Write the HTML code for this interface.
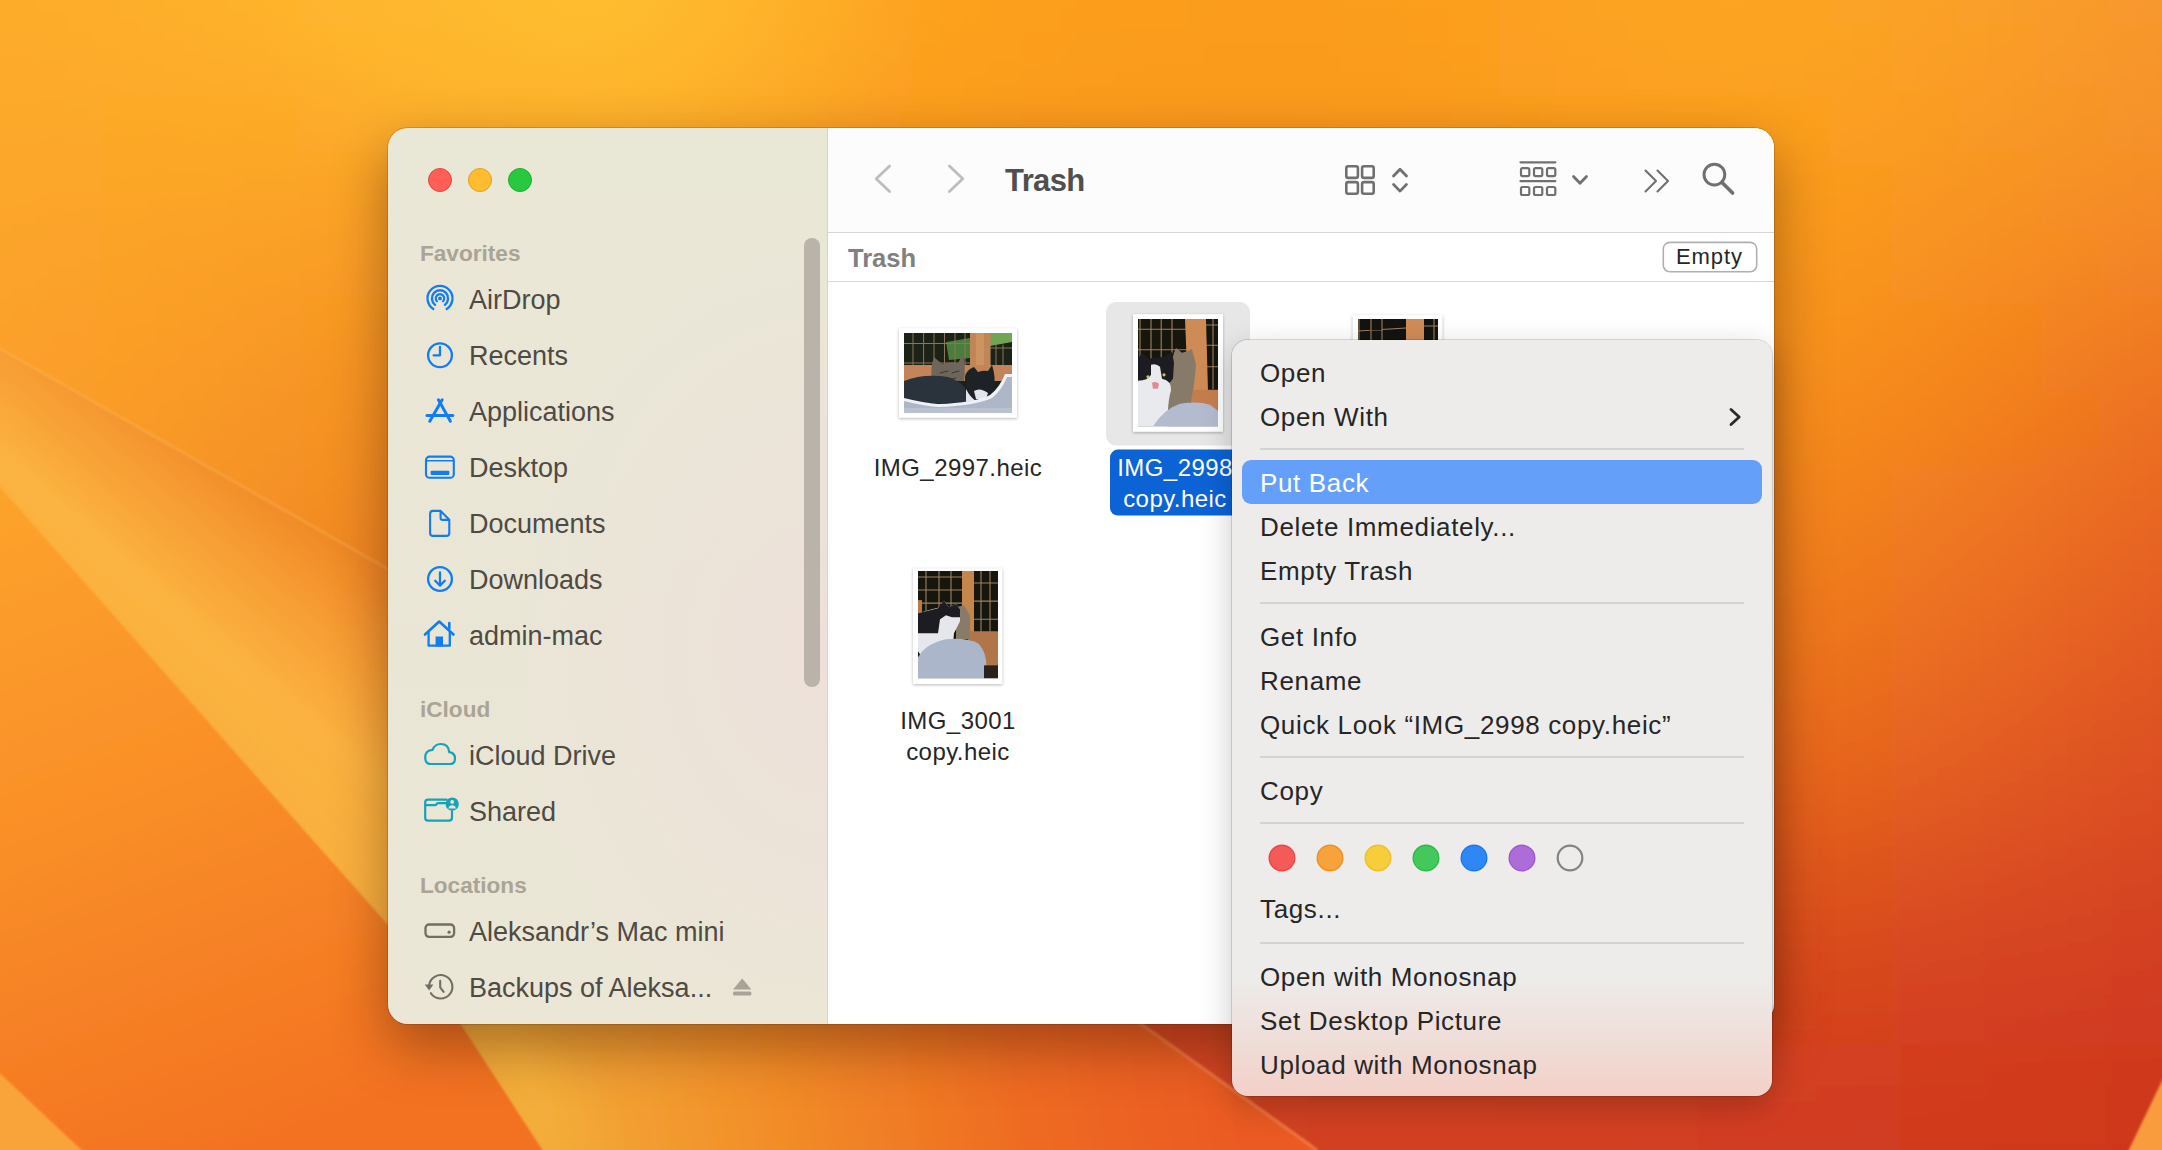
<!DOCTYPE html>
<html><head><meta charset="utf-8">
<style>
html,body{margin:0;padding:0;}
body{width:2162px;height:1150px;overflow:hidden;position:relative;font-family:"Liberation Sans",sans-serif;background:#F99A24;}
.abs{position:absolute;}
#wall{position:absolute;left:0;top:0;width:2162px;height:1150px;}
#win{position:absolute;left:388px;top:128px;width:1386px;height:896px;border-radius:20px;overflow:hidden;box-shadow:0 22px 55px rgba(50,15,0,0.40),0 0 0 1px rgba(0,0,0,0.14);}
#side{position:absolute;left:0;top:0;width:439px;height:896px;background:radial-gradient(ellipse 70% 45% at 100% 58%,rgba(237,224,218,1) 0%,rgba(237,224,218,0) 100%),linear-gradient(180deg,#E9E7D6 0%,#EAE6D6 60%,#EBE6D6 100%);border-right:1px solid #D9D3C3;}
#main{position:absolute;left:440px;top:0;width:946px;height:896px;background:#fff;}
#tb{position:absolute;left:0;top:0;width:946px;height:104px;background:#FCFCFC;border-bottom:1px solid #D6D6D6;}
#pb{position:absolute;left:0;top:105px;width:946px;height:48px;background:#fff;border-bottom:1px solid #D9D9D9;}
.tl{position:absolute;top:40px;width:24px;height:24px;border-radius:50%;box-sizing:border-box;}
.sh{position:absolute;left:32px;font-size:22.6px;font-weight:bold;color:#A9A495;}
.si{position:absolute;left:81px;font-size:27px;color:#4E4A44;white-space:nowrap;}
.ic{position:absolute;left:34px;}
#menu{position:absolute;left:1232px;top:340px;width:540px;height:756px;border-radius:16px;background:linear-gradient(180deg,#EDECEB 0%,#EDECEB 84%,#EEE4E0 89%,#F3D0C8 100%);box-shadow:0 0 0 1px rgba(0,0,0,0.13),0 10px 32px rgba(0,0,0,0.22);}
.mi{position:absolute;left:28px;font-size:26px;letter-spacing:0.65px;color:#262626;white-space:nowrap;line-height:30px;}
.sep{position:absolute;left:28px;width:484px;height:2px;background:#D3D3D3;}
.tag{position:absolute;top:504px;width:27px;height:27px;border-radius:50%;box-sizing:border-box;}
.lbl{position:absolute;font-size:24px;color:#262626;text-align:center;white-space:nowrap;line-height:31px;letter-spacing:0.45px;}
</style></head>
<body>
<svg id="wall" width="2162" height="1150" viewBox="0 0 2162 1150">
  <defs>
    <filter id="gblur" x="-300" y="-300" width="2762" height="1750" filterUnits="userSpaceOnUse"><feGaussianBlur stdDeviation="105"/></filter>
    <linearGradient id="gband" gradientUnits="userSpaceOnUse" x1="200" y1="713" x2="344" y2="544">
      <stop offset="0" stop-color="#FAAE3C"/>
      <stop offset="0.3" stop-color="#FBB240"/>
      <stop offset="0.65" stop-color="#F79E34"/>
      <stop offset="1" stop-color="#F08826"/>
    </linearGradient>
    <linearGradient id="gband2" gradientUnits="userSpaceOnUse" x1="0" y1="420" x2="1150" y2="1150">
      <stop offset="0" stop-color="#FFD060" stop-opacity="0.0"/>
      <stop offset="0.35" stop-color="#000" stop-opacity="0.0"/>
      <stop offset="1" stop-color="#900000" stop-opacity="0.0"/>
    </linearGradient>
    <linearGradient id="gbandB" gradientUnits="userSpaceOnUse" x1="540" y1="1150" x2="1230" y2="1040">
      <stop offset="0" stop-color="#F2AA38"/>
      <stop offset="0.35" stop-color="#F28C28"/>
      <stop offset="0.7" stop-color="#EE6A22"/>
      <stop offset="1" stop-color="#EA5A20"/>
    </linearGradient>
    <linearGradient id="gC" gradientUnits="userSpaceOnUse" x1="0" y1="480" x2="250" y2="1150">
      <stop offset="0" stop-color="#FDA42C"/>
      <stop offset="0.5" stop-color="#F98E28"/>
      <stop offset="1" stop-color="#F37222"/>
    </linearGradient>
    <radialGradient id="ry" gradientUnits="userSpaceOnUse" cx="590" cy="0" r="340" gradientTransform="translate(590 0) scale(1 0.7) translate(-590 0)">
      <stop offset="0" stop-color="#FFBE30" stop-opacity="0.85"/>
      <stop offset="0.6" stop-color="#FFBC30" stop-opacity="0.35"/>
      <stop offset="1" stop-color="#FFBC30" stop-opacity="0"/>
    </radialGradient>
    <clipPath id="bandclip"><path d="M-10 343 L388 569 L1140 1023 L1317 1150 L1331 1160 L549 1160 L460 1023 L388 925 L-10 476 Z"/></clipPath>
    <filter id="soft" x="-5%" y="-5%" width="110%" height="110%"><feGaussianBlur stdDeviation="1.2"/></filter>
    <filter id="soft2" x="-50%" y="-50%" width="200%" height="200%"><feGaussianBlur stdDeviation="25"/></filter>
  </defs>
  <g filter="url(#gblur)">
    <rect x="-400" y="-395" width="500" height="490" fill="#FDAC2C"/>
    <rect x="100" y="-395" width="200" height="490" fill="#FEB22C"/>
    <rect x="300" y="-395" width="200" height="490" fill="#FFB92E"/>
    <rect x="500" y="-395" width="200" height="490" fill="#FFBC2E"/>
    <rect x="700" y="-395" width="200" height="490" fill="#FEA822"/>
    <rect x="900" y="-395" width="200" height="490" fill="#FDA01E"/>
    <rect x="1100" y="-395" width="200" height="490" fill="#FC9E1C"/>
    <rect x="1300" y="-395" width="200" height="490" fill="#FC9E1E"/>
    <rect x="1500" y="-395" width="200" height="490" fill="#FDA420"/>
    <rect x="1700" y="-395" width="200" height="490" fill="#FDA822"/>
    <rect x="1900" y="-395" width="200" height="490" fill="#FAA02A"/>
    <rect x="2100" y="-395" width="500" height="490" fill="#F7962E"/>
    <rect x="-400" y="95" width="500" height="190" fill="#FCA62A"/>
    <rect x="100" y="95" width="200" height="190" fill="#FCA428"/>
    <rect x="300" y="95" width="200" height="190" fill="#FBA226"/>
    <rect x="500" y="95" width="200" height="190" fill="#FA9E24"/>
    <rect x="700" y="95" width="200" height="190" fill="#FA9C22"/>
    <rect x="900" y="95" width="200" height="190" fill="#FA9A1E"/>
    <rect x="1100" y="95" width="200" height="190" fill="#F9961C"/>
    <rect x="1300" y="95" width="200" height="190" fill="#FA981E"/>
    <rect x="1500" y="95" width="200" height="190" fill="#FB9C1E"/>
    <rect x="1700" y="95" width="200" height="190" fill="#FB9C1C"/>
    <rect x="1900" y="95" width="200" height="190" fill="#F89424"/>
    <rect x="2100" y="95" width="500" height="190" fill="#F48C2A"/>
    <rect x="-400" y="285" width="500" height="190" fill="#FBA02A"/>
    <rect x="100" y="285" width="200" height="190" fill="#F99A28"/>
    <rect x="300" y="285" width="200" height="190" fill="#F49024"/>
    <rect x="500" y="285" width="200" height="190" fill="#F08A22"/>
    <rect x="700" y="285" width="200" height="190" fill="#F08822"/>
    <rect x="900" y="285" width="200" height="190" fill="#F08620"/>
    <rect x="1100" y="285" width="200" height="190" fill="#F18620"/>
    <rect x="1300" y="285" width="200" height="190" fill="#F48C20"/>
    <rect x="1500" y="285" width="200" height="190" fill="#F7921E"/>
    <rect x="1700" y="285" width="200" height="190" fill="#F8921C"/>
    <rect x="1900" y="285" width="200" height="190" fill="#F4821E"/>
    <rect x="2100" y="285" width="500" height="190" fill="#EC6C24"/>
    <rect x="-400" y="475" width="500" height="190" fill="#FA9C2A"/>
    <rect x="100" y="475" width="200" height="190" fill="#F69228"/>
    <rect x="300" y="475" width="200" height="190" fill="#EE8424"/>
    <rect x="500" y="475" width="200" height="190" fill="#EC7E22"/>
    <rect x="700" y="475" width="200" height="190" fill="#EC7C22"/>
    <rect x="900" y="475" width="200" height="190" fill="#EC7A22"/>
    <rect x="1100" y="475" width="200" height="190" fill="#EC7822"/>
    <rect x="1300" y="475" width="200" height="190" fill="#EE7A20"/>
    <rect x="1500" y="475" width="200" height="190" fill="#F07E20"/>
    <rect x="1700" y="475" width="200" height="190" fill="#F2801C"/>
    <rect x="1900" y="475" width="200" height="190" fill="#EC6E20"/>
    <rect x="2100" y="475" width="500" height="190" fill="#E25A24"/>
    <rect x="-400" y="665" width="500" height="190" fill="#F89628"/>
    <rect x="100" y="665" width="200" height="190" fill="#F28626"/>
    <rect x="300" y="665" width="200" height="190" fill="#EA7424"/>
    <rect x="500" y="665" width="200" height="190" fill="#E66E22"/>
    <rect x="700" y="665" width="200" height="190" fill="#E46A22"/>
    <rect x="900" y="665" width="200" height="190" fill="#E46624"/>
    <rect x="1100" y="665" width="200" height="190" fill="#E46424"/>
    <rect x="1300" y="665" width="200" height="190" fill="#E66424"/>
    <rect x="1500" y="665" width="200" height="190" fill="#E86824"/>
    <rect x="1700" y="665" width="200" height="190" fill="#EA6A1E"/>
    <rect x="1900" y="665" width="200" height="190" fill="#E25A22"/>
    <rect x="2100" y="665" width="500" height="190" fill="#DC4C24"/>
    <rect x="-400" y="855" width="500" height="190" fill="#F58A26"/>
    <rect x="100" y="855" width="200" height="190" fill="#EE7C24"/>
    <rect x="300" y="855" width="200" height="190" fill="#E46624"/>
    <rect x="500" y="855" width="200" height="190" fill="#DE5A22"/>
    <rect x="700" y="855" width="200" height="190" fill="#DC5422"/>
    <rect x="900" y="855" width="200" height="190" fill="#DA5022"/>
    <rect x="1100" y="855" width="200" height="190" fill="#D84C22"/>
    <rect x="1300" y="855" width="200" height="190" fill="#DA4C22"/>
    <rect x="1500" y="855" width="200" height="190" fill="#D84820"/>
    <rect x="1700" y="855" width="200" height="190" fill="#D8461E"/>
    <rect x="1900" y="855" width="200" height="190" fill="#D44022"/>
    <rect x="2100" y="855" width="500" height="190" fill="#D03C24"/>
    <rect x="-400" y="1045" width="500" height="490" fill="#F27824"/>
    <rect x="100" y="1045" width="200" height="490" fill="#EC6E24"/>
    <rect x="300" y="1045" width="200" height="490" fill="#DE5A22"/>
    <rect x="500" y="1045" width="200" height="490" fill="#D64C22"/>
    <rect x="700" y="1045" width="200" height="490" fill="#D24622"/>
    <rect x="900" y="1045" width="200" height="490" fill="#D04222"/>
    <rect x="1100" y="1045" width="200" height="490" fill="#D04022"/>
    <rect x="1300" y="1045" width="200" height="490" fill="#D03E22"/>
    <rect x="1500" y="1045" width="200" height="490" fill="#D03C20"/>
    <rect x="1700" y="1045" width="200" height="490" fill="#D03A20"/>
    <rect x="1900" y="1045" width="200" height="490" fill="#D0381E"/>
    <rect x="2100" y="1045" width="500" height="490" fill="#CE361E"/>
  </g>
  <rect x="0" y="0" width="1200" height="400" fill="url(#ry)"/>
  <g filter="url(#soft)">
    <path d="M-10 343 L388 569 L1140 1023 L1317 1150 L1331 1160 L549 1160 L460 1023 L388 925 L-10 476 Z" fill="url(#gband)"/>
    <path d="M388 569 L1140 1023 L1317 1150 L1331 1160 L549 1160 L460 1023 L388 925 Z" fill="url(#gbandB)"/>
    <path d="M-10 476 L388 925 L460 1023 L549 1160 L-10 1160 Z" fill="url(#gC)"/>
    <path d="M-10 1064 L92 1160 L-10 1160 Z" fill="#F9A43A"/>
    <path d="M2172 1060 L2124 1160 L2172 1160 Z" fill="#F89C3E"/>
  </g>
  <path d="M-10 343 L388 569" stroke="#FFC870" stroke-opacity="0.3" stroke-width="2.5" fill="none" filter="url(#soft)"/>
  <path d="M1140 1023 L1317 1150" stroke="#FF9A60" stroke-opacity="0.5" stroke-width="3" fill="none" filter="url(#soft)"/>
  <g clip-path="url(#bandclip)">
    <path d="M-10 476 L388 925 L460 1023 L549 1160 L620 1160 L520 1000 L200 640 L-10 420 Z" fill="#FFC850" opacity="0.18" filter="url(#soft2)"/>
  </g>
  <g clip-path="url(#bandclip)">
    <rect x="-10" y="300" width="1400" height="900" fill="url(#gband2)"/>
  </g>
</svg>

<div id="win">
  <div id="side">
    <div class="tl" style="left:40px;background:#FF5F57;border:1px solid #E2463F;"></div>
    <div class="tl" style="left:80px;background:#FEBC2E;border:1px solid #DFA023;"></div>
    <div class="tl" style="left:120px;background:#28C840;border:1px solid #1DAD2B;"></div>
    <div class="abs" style="left:416px;top:110px;width:16px;height:449px;border-radius:8px;background:#B9B3A9;"></div>

    
    <svg class="abs" style="left:0;top:0;" width="439" height="895" viewBox="388 128 439 895" fill="none" stroke-linecap="round" stroke-linejoin="round">
      <g stroke="#127CF4" stroke-width="2.3">
        <!-- AirDrop -->
        <path d="M433.38 309 A12.5 12.5 0 1 1 446.62 309"/>
        <path d="M435.1 304.8 A8.1 8.1 0 1 1 444.9 304.8"/>
        <path d="M436.9 301.2 A4.2 4.2 0 1 1 443.1 301.2"/>
        <!-- Recents -->
        <circle cx="440" cy="355.3" r="11.9"/>
        <path d="M440 347 V355.3 H433.6"/>
        <!-- Applications -->
        <path d="M438.4 399.8 L450.4 421.2" stroke-width="3"/>
        <path d="M442.2 399.8 L429.8 421.2" stroke-width="3"/>
        <path d="M427 415.4 H452.8" stroke-width="3"/>
        <!-- Desktop -->
        <rect x="426" y="456.6" width="27.8" height="21.2" rx="3.6" stroke-width="2.1"/>
        <path d="M426.5 460.7 H453.3" stroke-width="1.6"/>
        <!-- Documents -->
        <path d="M440.6 510.9 H433 Q430.1 510.9 430.1 513.8 V533 Q430.1 535.9 433 535.9 H446.4 Q449.3 535.9 449.3 533 V519.8 Z" stroke-width="2.1"/>
        <path d="M440.6 511.2 V518 Q440.6 519.9 442.5 519.9 H449" stroke-width="2.1"/>
        <!-- Downloads -->
        <circle cx="440" cy="579" r="11.9"/>
        <path d="M440 572.5 V585.5 M435.2 580.8 L440 585.6 L444.8 580.8"/>
        <!-- Home -->
        <path d="M425 634.5 L439.2 621.5 L453.5 634.5" stroke-width="2.6"/>
        <path d="M428.6 632 V645.7 H449.8 V632" stroke-width="2.3"/>
        <path d="M449.3 623 V628.5" stroke-width="2.6"/>
      </g>
      <g fill="#127CF4">
        <circle cx="440" cy="298.4" r="1.9"/>
        <rect x="430.6" y="470.8" width="18.8" height="4.2" rx="1.2"/>
        <rect x="435.6" y="636.5" width="7.4" height="10" />
      </g>
      <g stroke="#17A2B6" stroke-width="2.2">
        <!-- iCloud -->
        <path d="M430.6 764 H450.2 Q455 764 455 758.6 Q455 753 449.2 752.2 Q448.6 744 440.8 744 Q434.8 744 432.6 749.8 Q425.2 750.4 425.2 757.3 Q425.2 764 430.6 764 Z"/>
        <!-- Shared -->
        <path d="M446.5 799.6 H428 Q425.2 799.6 425.2 802.4 V817.8 Q425.2 820.6 428 820.6 H449 Q452 820.6 452 817.8 V811"/>
        <path d="M425.5 805.2 H435.5 L437.6 803.1 H446" />
      </g>
      <g fill="#17A2B6">
        <circle cx="452.2" cy="804" r="6.6"/>
      </g>
      <g fill="#ECE6D5">
        <circle cx="452.2" cy="801.9" r="1.9"/>
        <path d="M448.4 808.6 Q449 805.2 452.2 805.2 Q455.4 805.2 456 808.6 Z"/>
      </g>
      <g stroke="#736E64" stroke-width="2.3">
        <!-- HD -->
        <rect x="425.5" y="924.5" width="28.6" height="12.4" rx="3.6"/>
        <!-- Time machine -->
        <path d="M429.1 985.2 A11.7 11.7 0 1 1 430.9 993.2" stroke-width="2.1"/>
        <path d="M440.2 980.8 V987.4 L443.6 991.9" stroke-width="2.1"/>
      </g>
      <g fill="#736E64">
        <circle cx="449.1" cy="932.2" r="1.6"/>
        <path d="M424.8 984.4 L433.4 984.4 L429.1 990.4 Z"/>
        <path d="M733 989.6 L742.2 978.6 L751.4 989.6 Z" fill="#A8A396"/>
        <rect x="733" y="991.5" width="18.4" height="4" rx="1.5" fill="#A8A396"/>
      </g>
    </svg>
    <div class="sh" style="top:113px;">Favorites</div>
    <div class="si" style="top:157px;">AirDrop</div>
    <div class="si" style="top:213px;">Recents</div>
    <div class="si" style="top:269px;">Applications</div>
    <div class="si" style="top:325px;">Desktop</div>
    <div class="si" style="top:381px;">Documents</div>
    <div class="si" style="top:437px;">Downloads</div>
    <div class="si" style="top:493px;">admin-mac</div>
    <div class="sh" style="top:569px;">iCloud</div>
    <div class="si" style="top:613px;">iCloud Drive</div>
    <div class="si" style="top:669px;">Shared</div>
    <div class="sh" style="top:745px;">Locations</div>
    <div class="si" style="top:789px;">Aleksandr’s Mac mini</div>
    <div class="si" style="top:845px;">Backups of Aleksa...</div>
  </div>
  <div id="main">
    <div id="tb"></div>
    <div id="pb"></div>
    <svg class="abs" style="left:0;top:0;" width="945" height="895" viewBox="828 128 945 895" fill="none" stroke-linecap="round" stroke-linejoin="round">
      <defs><filter id="pblur" x="0" y="0" width="100%" height="100%"><feGaussianBlur stdDeviation="0.45"/></filter></defs>
      <!-- back/forward -->
      <g stroke="#BDBDBD" stroke-width="2.8">
        <path d="M889.6 166 L876.2 178.8 L889.6 191.5"/>
        <path d="M949.4 166 L962.8 178.8 L949.4 191.5"/>
      </g>
      <g stroke="#707070" stroke-width="2.6">
        <!-- grid -->
        <rect x="1346.3" y="166.3" width="11.6" height="11.6" rx="2"/>
        <rect x="1362.1" y="166.3" width="11.6" height="11.6" rx="2"/>
        <rect x="1346.3" y="182.1" width="11.6" height="11.6" rx="2"/>
        <rect x="1362.1" y="182.1" width="11.6" height="11.6" rx="2"/>
        <path d="M1393.5 176 L1400 169.3 L1406.5 176 M1393.5 184.4 L1400 191.1 L1406.5 184.4" stroke-width="2.8"/>
        <!-- group -->
        <path d="M1520.5 162.3 H1555.3 M1520.5 181.2 H1555.3" stroke-width="2.2"/>
        <rect x="1521" y="168.2" width="8.3" height="8" rx="1.6" stroke-width="2.2"/>
        <rect x="1534" y="168.2" width="8.3" height="8" rx="1.6" stroke-width="2.2"/>
        <rect x="1547" y="168.2" width="8.3" height="8" rx="1.6" stroke-width="2.2"/>
        <rect x="1521" y="187" width="8.3" height="8" rx="1.6" stroke-width="2.2"/>
        <rect x="1534" y="187" width="8.3" height="8" rx="1.6" stroke-width="2.2"/>
        <rect x="1547" y="187" width="8.3" height="8" rx="1.6" stroke-width="2.2"/>
        <path d="M1573.5 176.5 L1580 183.3 L1586.5 176.5" stroke-width="2.8"/>
        <!-- >> -->
        <path d="M1645.5 170.5 L1656 181 L1645.5 191.5 M1657.5 170.5 L1668 181 L1657.5 191.5" stroke-width="2.1"/>
        <!-- search -->
        <circle cx="1714.4" cy="174.6" r="10.4" stroke-width="3"/>
        <path d="M1722 182.4 L1732.6 193" stroke-width="3.6"/>
      </g>
      <!-- Empty button -->
      <rect x="1663.3" y="242.4" width="93.4" height="29.4" rx="6.5" fill="#fff" stroke="#B0B0B0" stroke-width="1.6"/>
      <!-- selection bg -->
      <rect x="1106" y="302" width="144" height="143.5" rx="10" fill="#E7E7E7"/>
      <rect x="1110" y="449.6" width="140" height="66" rx="8" fill="#0B63D6"/>
      <!-- thumbnails frames -->
      <g fill="#fff" style="filter:drop-shadow(0 1px 1.5px rgba(0,0,0,0.28))">
        <rect x="899" y="328.2" width="118" height="89.6"/>
        <rect x="1133" y="314.2" width="90" height="117.6"/>
        <rect x="1352.5" y="315" width="90" height="117.6"/>
        <rect x="913" y="568.4" width="89.4" height="115.6"/>
      </g>

      <!-- photo 1 -->
      <svg x="904" y="333" width="108" height="80" viewBox="0 0 108 80" preserveAspectRatio="none" stroke="none">
        <g filter="url(#pblur)">
        <rect width="108" height="80" fill="#1B2118"/>
        <path d="M42 9 L66 5 L66 25 L45 27 Z" fill="#4C7E3C"/>
        <path d="M86 0 L108 0 L108 9 L86 13 Z" fill="#72A456"/>
        <g stroke="#8C765A" stroke-width="1" fill="none">
          <path d="M9 0 V33 M19.6 0 V33 M30 0 V33 M40.5 0 V33 M51 0 V33 M61 0 V33 M0 10.5 H66 M0 30 H66 M92 12 V33 M99 12 V33 M86 15 H108"/>
        </g>
        <path d="M66 0 H86.6 V34 H66 Z" fill="#C08658"/>
        <path d="M72 0 H80 V34 H72 Z" fill="#CC9464"/>
        <path d="M0 32 H108 V48 H0 Z" fill="#C28458"/>
        <path d="M28 48 Q26 34 30 24 L38 31 Q46 28 54 30 L59 21 Q62 34 60 48 Z" fill="#6E665A"/>
        <path d="M36 40 L44 38 M48 40 L55 38 M40 46 Q46 48 52 45" stroke="#3C3830" stroke-width="1" fill="none"/>
        <path d="M0 48 Q20 40 44 44 Q62 50 64 62 L62 70 L0 70 Z" fill="#2A303A"/>
        <path d="M61 48 Q60 40 66 36 L70 34 L74 39 Q80 37 84 38 L88 32 Q92 44 90 56 L88 66 L62 68 Z" fill="#1E2026"/>
        <path d="M62 56 Q66 64 72 68 L62 69 Z M70 58 Q76 54 84 60 L82 66 L72 66 Z" fill="#E2E5EB"/>
        <path d="M0 65 Q20 70 34 71 Q70 70 86 62 Q96 54 101 41 H108 V80 H0 Z" fill="#EEF1F5"/>
        <path d="M0 68 Q20 73 34 74 Q70 73 88 65 Q98 57 103 44 H108 V80 H0 Z" fill="#AEB7C5"/>
        <path d="M0 75 H108 V80 H0 Z" fill="#BAC2CF"/>
        </g>
      </svg>
      <!-- photo 2 -->
      <svg x="1138" y="319" width="80" height="107.6" viewBox="0 0 80 108" preserveAspectRatio="none" stroke="none">
        <g filter="url(#pblur)">
        <rect width="80" height="108" fill="#141510"/>
        <g stroke="#A08060" stroke-width="1.1" fill="none">
          <path d="M2 0 V40 M13 0 V40 M23.2 0 V40 M34 0 V34 M0 10.3 H48 M0 30.8 H48 M75 0 V70 M67 6 H80 M67 26.4 H80 M67 48 H80"/>
        </g>
        <path d="M47 0 H68 L70 73 H50 Z" fill="#CE8B55"/>
        <path d="M53 71 H80 V92 H53 Z" fill="#C47E4E"/>
        <path d="M29 60 L36 34 L38 29 L44 34 L50 32 L54 30 L58 46 L56 66 L52 88 L28 92 Z" fill="#887A68"/>
        <path d="M0 40 L4 34 L10 40 L26 38 L34 33 L36 44 L35 60 L30 66 L0 66 Z" fill="#1D1F24"/>
        <path d="M13 46 Q18 44 22 48 L24 60 Q34 62 33 72 Q30 80 29 108 H0 V62 Q10 62 13 56 Z" fill="#E8EAEE"/>
        <path d="M14 64 Q18 62 21 65 L20 70 L15 70 Z" fill="#E08A96"/>
        <circle cx="10" cy="58" r="1.6" fill="#C8C850"/><circle cx="26" cy="56" r="1.6" fill="#C8C850"/>
        <path d="M15 108 Q26 90 42 85 Q60 82 72 86 L80 92 V108 Z" fill="#B2BCCE"/>
        </g>
      </svg>
      <!-- photo 3 (top part) -->
      <svg x="1358" y="319" width="80" height="24" viewBox="0 0 80 24" preserveAspectRatio="none" stroke="none">
        <rect width="80" height="24" fill="#131410"/>
        <g stroke="#A08060" stroke-width="1.1" fill="none">
          <path d="M1 0 V24 M13 0 V24 M24 0 V24 M76 0 V24 M0 12 L48 9 M66 7 H80"/>
        </g>
        <path d="M48 0 H66 V24 H48 Z" fill="#D08C58"/>
      </svg>
      <!-- photo 4 -->
      <svg x="918" y="571" width="80" height="107.4" viewBox="0 0 80 107" preserveAspectRatio="none" stroke="none">
        <g filter="url(#pblur)">
        <rect width="80" height="107" fill="#16160F"/>
        <g stroke="#9C8262" stroke-width="1.1" fill="none">
          <path d="M8 0 V45 M21 0 V45 M33 0 V40 M0 6 H44 M0 19 H44 M0 32 H44 M63 0 V61 M72 0 V61 M56 12 H80 M56 30 H80 M56 48 H80"/>
        </g>
        <path d="M44 0 H56 V62 H44 Z" fill="#C4864E"/>
        <path d="M0 29 H4 V46 H0 Z" fill="#B87A48"/>
        <path d="M50 60 H80 V96 H50 Z" fill="#B0744A"/>
        <path d="M38 36 L46 34 L52 44 L52 68 L38 68 Z" fill="#8A7A68"/>
        <path d="M0 42 L14 38 L22 36 L26 30 L31 36 L38 33 L42 38 L42 50 L36 62 L34 84 L4 86 L0 80 Z" fill="#E6E7EA"/>
        <path d="M20 37 L26 30 L31 36 L38 33 L42 38 L42 46 L34 46 L28 44 L22 48 L20 62 L0 62 L0 42 Z" fill="#1C1C20"/>
        <path d="M0 86 Q8 72 28 68 Q48 66 60 72 Q70 82 68 100 L66 107 H0 Z" fill="#ABB6CA"/>
        <path d="M66 94 L80 94 V107 H66 Z" fill="#2A241E"/>
        </g>
      </svg>
    </svg>
    <div class="abs" style="left:177px;top:35px;font-size:31px;font-weight:bold;color:#4F4F4F;letter-spacing:-0.6px;">Trash</div>
    <div class="abs" style="left:20px;top:116px;font-size:25.5px;font-weight:bold;color:#808080;">Trash</div>
    <div class="abs" style="left:848px;top:116px;font-size:22px;color:#262626;letter-spacing:0.9px;">Empty</div>
    <div class="lbl" style="left:40px;top:324px;width:180px;">IMG_2997.heic</div>
    <div class="lbl" style="left:272px;top:324px;width:150px;color:#fff;">IMG_2998<br>copy.heic</div>
    <div class="lbl" style="left:40px;top:577px;width:180px;">IMG_3001<br>copy.heic</div>
  </div>
</div>

<div id="menu">
  <div class="mi" style="top:18px;">Open</div>
  <div class="mi" style="top:62px;">Open With</div>
  <div class="sep" style="top:108px;"></div>
  <div class="abs" style="left:10px;top:120px;width:520px;height:44px;border-radius:9px;background:#64A0FA;"></div>
  <div class="mi" style="top:128px;color:#fff;">Put Back</div>
  <div class="mi" style="top:172px;">Delete Immediately...</div>
  <div class="mi" style="top:216px;">Empty Trash</div>
  <div class="sep" style="top:262px;"></div>
  <div class="mi" style="top:282px;">Get Info</div>
  <div class="mi" style="top:326px;">Rename</div>
  <div class="mi" style="top:370px;">Quick Look “IMG_2998 copy.heic”</div>
  <div class="sep" style="top:416px;"></div>
  <div class="mi" style="top:436px;">Copy</div>
  <div class="sep" style="top:482px;"></div>
  <svg class="abs" style="left:0;top:0;" width="540" height="755" viewBox="1232 340 540 755" fill="none">
    <path d="M1731 409.5 L1739.2 417 L1731 424.5" stroke="#2A2A2A" stroke-width="2.8" stroke-linecap="round" stroke-linejoin="round"/>
    <circle cx="1282" cy="858" r="12.8" fill="#F45A58" stroke="#EC4744" stroke-width="1.4"/>
    <circle cx="1330" cy="858" r="12.8" fill="#F5A33A" stroke="#EF901F" stroke-width="1.4"/>
    <circle cx="1378" cy="858" r="12.8" fill="#F6CD3A" stroke="#F0BF22" stroke-width="1.4"/>
    <circle cx="1426" cy="858" r="12.8" fill="#43C95B" stroke="#2DBA45" stroke-width="1.4"/>
    <circle cx="1474" cy="858" r="12.8" fill="#2F87F6" stroke="#1F78EF" stroke-width="1.4"/>
    <circle cx="1522" cy="858" r="12.8" fill="#AC6DD8" stroke="#9E58D2" stroke-width="1.4"/>
    <circle cx="1570" cy="858" r="12.3" fill="none" stroke="#838383" stroke-width="2.2"/>
  </svg>
  <div class="mi" style="top:554px;">Tags...</div>
  <div class="sep" style="top:602px;"></div>
  <div class="mi" style="top:622px;">Open with Monosnap</div>
  <div class="mi" style="top:666px;">Set Desktop Picture</div>
  <div class="mi" style="top:710px;">Upload with Monosnap</div>
</div>
</body></html>
